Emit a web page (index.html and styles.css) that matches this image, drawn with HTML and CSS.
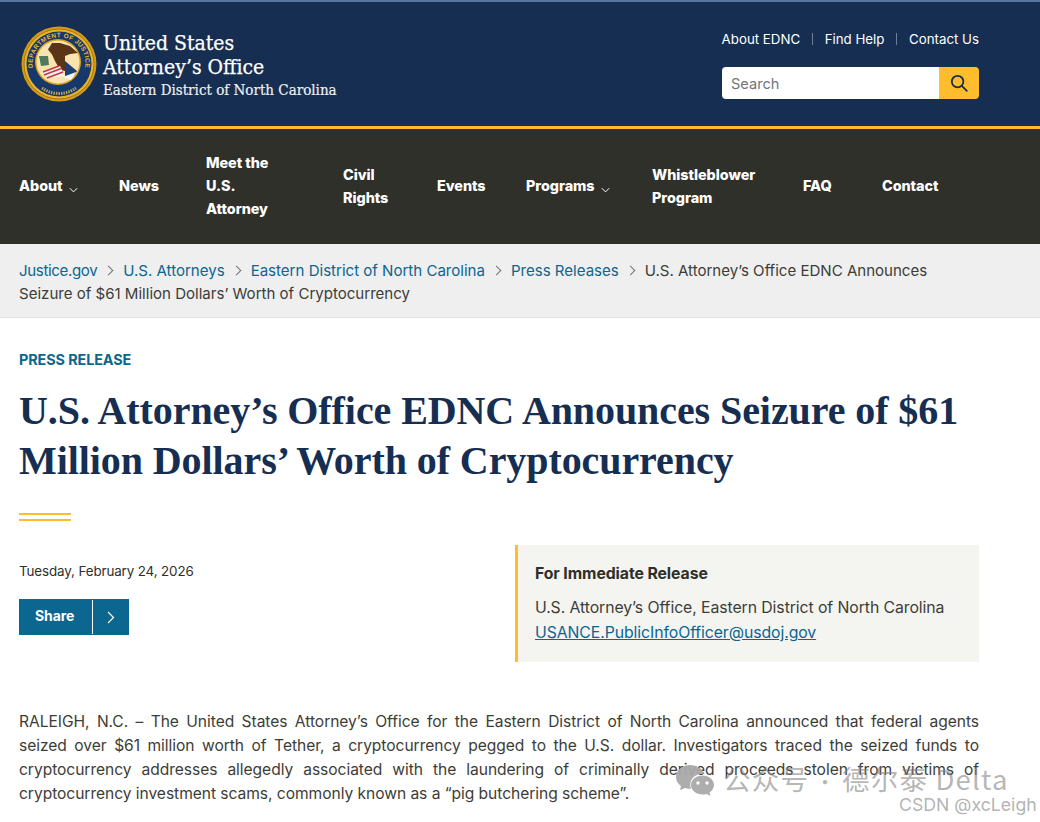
FILE: index.html
```
<!DOCTYPE html>
<html lang="en">
<head>
<meta charset="utf-8">
<title>U.S. Attorney's Office EDNC</title>
<link rel="stylesheet" href="styles.css">
</head>
<body>
<header class="masthead">
  <a class="brand">
    <svg class="seal" width="76" height="76" viewBox="0 0 76 76">
      <defs><path id="sealarc" d="M17 54A26.500 26.500 0 1 1 59 54"/></defs>
      <circle cx="38" cy="38" r="37.500" fill="#d4991a"/>
      <circle cx="38" cy="38" r="35" fill="#eab52c" stroke="#a87a10" stroke-width="1"/>
      <circle cx="38" cy="38" r="32.500" fill="#17386a"/>
      <text class="seal-text"><textPath href="#sealarc" startOffset="50%" text-anchor="middle">DEPARTMENT OF JUSTICE</textPath></text>
      <path d="M21 62a29 29 0 0 0 34 0" fill="none" stroke="#b9a25a" stroke-width="3" stroke-dasharray="1.500 1"/>
      <circle cx="37" cy="36" r="23" fill="#d9a21e"/>
      <circle cx="37" cy="36" r="21.500" fill="#fbe3ae"/>
      <path d="M18 30l9 0 1 9-8 1z" fill="#4f7b5c"/>
      <path d="M44 35l12 10-3 4-9 1z" fill="#1e3f73"/>
      <path d="M27 23.500l4-6.500h8l10 3 8 7-8 1-5 2v15l-5-1-5-9-3-6.500z" fill="#5a3417"/>
      <path d="M21 47l18-7 5 10-15 2z" fill="#f1f1f1"/>
      <path d="M22 46l16-6M23 49l17-6.500M26 52l16-6" stroke="#c8343f" stroke-width="1.600"/>
      <path d="M42 51l13-5-5 8z" fill="#f7f7f7"/>
    </svg>
    <div class="brand-text">
      <div class="brand-main">United States<br>Attorney’s Office</div>
      <div class="brand-sub">Eastern District of North Carolina</div>
    </div>
  </a>
  <div class="utility">
    <nav class="util-links">
      <a>About EDNC</a><a>Find Help</a><a>Contact Us</a>
    </nav>
    <form class="search">
      <span class="search-field">Search</span>
      <span class="search-btn">
        <svg width="18" height="18" viewBox="0 0 18 18" fill="none" stroke="#162e51" stroke-width="1.8"><circle cx="7.600" cy="7.600" r="5.800"/><path d="M11.800 11.800l5 5" stroke-linecap="round"/></svg>
      </span>
    </form>
  </div>
</header>
<nav class="mainnav">
  <a class="nav-item nav-about">About <svg class="chev" width="9" height="6" viewBox="0 0 9 6" fill="none" stroke="#fff" stroke-width="1"><path d="M.8 1.200l3.700 3.700 3.700-3.700"/></svg></a>
  <a class="nav-item nav-news">News</a>
  <a class="nav-item nav-meet">Meet the<br>U.S.<br>Attorney</a>
  <a class="nav-item nav-civil">Civil<br>Rights</a>
  <a class="nav-item nav-events">Events</a>
  <a class="nav-item nav-programs">Programs <svg class="chev" width="9" height="6" viewBox="0 0 9 6" fill="none" stroke="#fff" stroke-width="1"><path d="M.8 1.200l3.700 3.700 3.700-3.700"/></svg></a>
  <a class="nav-item nav-whistle">Whistleblower<br>Program</a>
  <a class="nav-item nav-faq">FAQ</a>
  <a class="nav-item nav-contact">Contact</a>
</nav>
<div class="crumbs">
  <a class="crumb-first">Justice.gov</a><span class="sep"></span><a>U.S. Attorneys</a><span class="sep"></span><a>Eastern District of North Carolina</a><span class="sep"></span><a>Press Releases</a><span class="sep"></span>U.S. Attorney’s Office EDNC Announces Seizure of $61 Million Dollars’ Worth of Cryptocurrency
</div>
<main class="content">
  <div class="eyebrow">PRESS RELEASE</div>
  <h1 class="title">U.S. Attorney’s Office EDNC Announces Seizure of $61 Million Dollars’ Worth of Cryptocurrency</h1>
  <div class="rule"></div>
  <div class="meta-row">
    <div class="meta-left">
      <div class="date">Tuesday, February 24, 2026</div>
      <a class="share"><span class="share-label">Share</span><span class="share-icon"><svg width="8" height="13" viewBox="0 0 8 13" fill="none" stroke="#fff" stroke-width="1.200"><path d="M1 1l5.500 5.500L1 12"/></svg></span></a>
    </div>
    <aside class="release">
      <div class="release-head">For Immediate Release</div>
      <div class="release-line">U.S. Attorney’s Office, Eastern District of North Carolina</div>
      <a class="release-mail">USANCE.PublicInfoOfficer@usdoj.gov</a>
    </aside>
  </div>
  <p class="body-text">RALEIGH, N.C. – The United States Attorney’s Office for the Eastern District of North Carolina announced that federal agents seized&nbsp;over $61 million worth of Tether, a cryptocurrency pegged to the U.S. dollar. Investigators traced the seized funds to cryptocurrency addresses allegedly associated with the laundering of criminally derived proceeds stolen from victims of cryptocurrency investment scams, commonly known as a “pig butchering scheme”.</p>
</main>
<div class="watermark">
  <svg width="40" height="32" viewBox="0 0 40 32" fill="#a9a9a9"><path d="M15 1C7 1 1 6 1 13c0 4 2 7 5 9l-1 4 5-2c2 .5 3 .7 5 .7h1c-.5-1.500-.7-2.700-.7-4 0-6.500 5.700-11 12.700-11h1C27.500 4.500 22 1 15 1z"/><path d="M39 21c0-5.500-5.500-9.500-11.500-9.500S16 15.500 16 21s5.500 9.500 11.500 9.500c1.500 0 2.800-.3 4-.6l4 2-1-3.400c2.800-2 4.500-4.600 4.500-7.500z"/><circle cx="23" cy="19" r="1.700" fill="#fff"/><circle cx="32" cy="19" r="1.700" fill="#fff"/></svg>
  <span class="wm-text">公众号 <span class="wm-dot">·</span> 德尔泰 Delta</span>
</div>
<div class="csdn">CSDN @xcLeigh</div>
</body>
</html>
```
FILE: styles.css
```
* { box-sizing: border-box; }
html, body { margin: 0; padding: 0; }
body {
  width: 1040px;
  height: 822px;
  overflow: hidden;
  background: #fff;
  color: #2f2f2a;
  font-family: "Inter", "Liberation Sans", sans-serif;
  position: relative;
}
a { text-decoration: none; color: inherit; }

.masthead {
  height: 129px;
  background: #162e51;
  border-top: 2px solid #5a76a0;
  border-bottom: 3px solid #ffbc2c;
  padding: 0 61px 0 21px;
  display: flex;
  justify-content: space-between;
}
.brand { display: flex; align-items: flex-start; padding-top: 24px; }
.seal { flex: none; display: block; }
.brand-text { margin-left: 6px; padding-top: 5px; color: #fff; font-family: "DejaVu Serif Condensed", "DejaVu Serif", serif; font-stretch: condensed; }
.brand-main { font-size: 21px; line-height: 24px; font-weight: 400; -webkit-text-stroke: .25px #fff; }
.brand-sub { font-size: 15px; line-height: 18px; margin-top: 2px; color: #f0f0f0; font-weight: 400; -webkit-text-stroke: .2px #f0f0f0; }
.seal-text { font: 700 6.400px "Liberation Sans", sans-serif; fill: #e9b93a; letter-spacing: .35px; }

.utility { width: 258px; padding-top: 28px; }
.util-links { display: flex; justify-content: flex-end; color: #fff; font-size: 13.300px; line-height: 18px; white-space: nowrap; }
.util-links a + a { margin-left: 12px; padding-left: 12.500px; position: relative; }
.util-links a + a::before { content: ""; position: absolute; left: 0; top: 3px; width: 1px; height: 12px; background: #6f7f97; }
.search { display: flex; margin-top: 19px; height: 32px; margin-left: 1px; border-radius: 4px; overflow: hidden; }
.search-field { flex: 1; background: #fff; color: #71767a; font-size: 14.600px; line-height: 34px; padding-left: 9px; }
.search-btn { width: 40px; background: #ffbc2c; display: flex; align-items: center; justify-content: center; }

.mainnav { height: 115px; background: #30302b; display: flex; align-items: center; position: relative; padding-left: 19px; color: #fff; font-size: 14.400px; font-weight: 800; line-height: 22.800px; letter-spacing: -.05px; }
.nav-item { display: block; flex: none; }
.nav-about { width: 100px; }
.nav-news { width: 87px; }
.nav-meet { width: 137px; }
.nav-civil { width: 94px; }
.nav-events { width: 89px; }
.nav-programs { width: 126px; }
.nav-whistle { width: 151px; }
.nav-faq { width: 79px; }
.nav-contact { width: 80px; }
.chev { margin-left: 3px; vertical-align: -2px; }

.crumbs { height: 74px; background: #efefef; border-bottom: 1px solid #dfe1e2; padding: 15px 100px 0 19px; font-size: 15.050px; line-height: 23px; color: #3d3d38; }
.crumbs a { color: #0b6690; }
.crumb-first { letter-spacing: -.35px; }
.sep { display: inline-block; width: 26px; height: 10px; position: relative; }
.sep::before { content: ""; position: absolute; left: 8px; top: 1px; width: 6px; height: 6px; border-top: 1.500px solid #71767a; border-right: 1.500px solid #71767a; transform: rotate(45deg); }

.content { padding: 0 61px 0 19px; }
.eyebrow { margin-top: 33px; font-size: 14.400px; line-height: 17px; font-weight: 700; color: #0b6690; letter-spacing: -.1px; }
.title { margin: 18px 0 0; font-family: "Liberation Serif", serif; font-weight: 700; font-size: 40px; line-height: 50px; color: #162e51; letter-spacing: -.08px; }
.rule { margin-top: 27px; width: 52px; height: 8px; border-top: 2px solid #ffbc2c; border-bottom: 2px solid #ffbc2c; }

.meta-row { display: flex; justify-content: space-between; margin-top: 24px; }
.meta-left { padding-top: 17px; }
.date { font-size: 13.400px; line-height: 18px; letter-spacing: -.12px; }
.share { margin-top: 19px; display: flex; width: 110px; height: 36px; background: #0b6690; color: #fff; font-size: 14px; font-weight: 700; letter-spacing: -.1px; }
.share-label { width: 74px; line-height: 32px; padding-left: 16px; border-right: 1px solid #fff; margin: 1px 0; }
.share-icon { flex: 1; display: flex; align-items: center; justify-content: center; }

.release { width: 464px; height: 117px; background: #f4f4f0; border-left: 3px solid #ffbc2c; padding: 17px 0 0 17px; font-size: 15.800px; line-height: 25px; color: #3d3d38; letter-spacing: -.08px; }
.release-head { font-weight: 700; color: #2f2f2a; line-height: 24px; margin-bottom: 9px; }
.release-line { line-height: 25px; }
.release-mail { color: #0b6690; text-decoration: underline; display: block; }

.body-text { margin: 48px 0 0; font-size: 15.600px; line-height: 24px; text-align: justify; color: #3d3d38; letter-spacing: -.05px; }

.watermark { position: absolute; left: 675px; top: 760px; display: flex; align-items: center; gap: 8px; opacity: .95; }
.wm-text { font-family: "Noto Sans CJK SC", sans-serif; font-size: 27.500px; line-height: 36px; color: rgba(130,130,130,.62); letter-spacing: 1.200px; white-space: nowrap; }
.wm-dot { margin: 0 -1.500px; font-size: 20px; }
.csdn { position: absolute; left: 899px; top: 794px; font-size: 17.700px; line-height: 22px; color: rgba(130,130,130,.62); white-space: nowrap; }
```
